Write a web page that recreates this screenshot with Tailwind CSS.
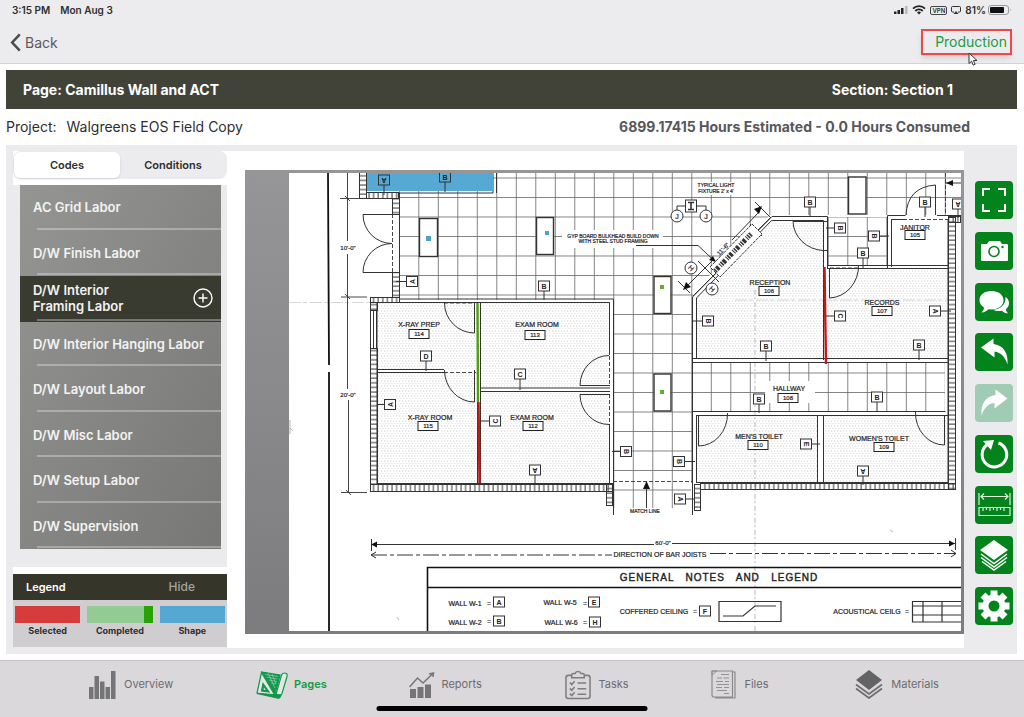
<!doctype html>
<html lang="en">
<head>
<meta charset="utf-8">
<meta name="viewport" content="width=device-width, initial-scale=1">
<title>Camillus Wall and ACT</title>
<script src="https://cdn.jsdelivr.net/npm/@tailwindcss/browser@4"></script>
</head>
<body class="min-h-screen flex flex-col bg-white font-['Inter',sans-serif] text-[#2e2e30]">

<header class="bg-[#ecebee] border-b border-[#d3d2d6]">
  <div class="h-5 pl-3 pr-3 flex items-center justify-between text-[10px] font-semibold">
    <div class="flex gap-2.5"><span>3:15 PM</span><span>Mon Aug 3</span></div>
    <div class="flex items-center gap-1">
      <svg class="w-3.5 h-2.5" viewBox="0 0 14 10"><path d="M0 6.500h2.500V9H0zM3.500 5H6v4H3.500zM7 3h2.500v6H7z" fill="#222"/><path d="M11 1h2.500v8H11z" fill="#bbb"/></svg>
      <svg class="w-3.5 h-2.5" viewBox="0 0 14 10" fill="none" stroke="#222" stroke-width="1.800"><path d="M1 3.600a8.500 8.500 0 0 1 12 0M3.300 6a5.200 5.200 0 0 1 7.400 0"/><path d="M7 9.600L5 7.600a2.800 2.800 0 0 1 4 0z" fill="#222" stroke="none"/></svg>
      <span class="w-[17px] h-[9px] border border-[#444] rounded-xs text-[6px] leading-[7px] text-center">VPN</span>
      <svg class="w-2.5 h-2.5" viewBox="0 0 10 10" fill="none" stroke="#333"><path d="M3 7H1.500Q.5 7 .5 6V2.500q0-1 1-1h7q1 0 1 1V6q0 1-1 1H7"/><path d="M5 6l2.500 3h-5z" fill="#333" stroke="none"/></svg>
      <div class="flex items-center gap-0.5">
        <span>81%</span>
        <svg class="w-6 h-2.5" viewBox="0 0 24 10"><rect x=".5" y=".5" width="20" height="9" rx="2.500" fill="none" stroke="#999"/><rect x="2" y="2" width="14" height="6" rx="1" fill="#111"/><path d="M22 3.500q1.500 1.500 0 3z" fill="#999"/></svg>
      </div>
    </div>
  </div>
  <nav class="relative h-[43px] pl-2.5 pr-3 flex items-center justify-between">
    <button class="pt-0.5 flex items-center gap-1 text-[14px] text-[#5a5a5d]">
      <svg class="w-[11px] h-[19px]" viewBox="0 0 11 20" fill="none" stroke="#4a4a4c" stroke-width="2.600"><path d="M10 1.500L2 10l8 8.500"/></svg>
      Back
    </button>
    <button class="h-[26px] pl-3 pr-[3px] border-2 border-[#ec4a4a] text-[14px] leading-5 text-[#1c9a48] shadow-md">Production</button>
    <svg class="absolute right-[46px] top-8 w-[10px] h-[14px]" viewBox="0 0 10 14"><path d="M1 1v10.500l2.500-2.300 1.700 3.900 1.900-.8-1.700-3.800H9z" fill="#fff" stroke="#333"/></svg>
  </nav>
</header>

<main class="flex-1 pl-1.5 pr-[7px] pt-1.5 pb-1.5">
  <div class="h-[39px] pl-[17px] pr-16 flex items-center justify-between bg-[#424338] text-white text-[14px] font-bold">
    <h1>Page: Camillus Wall and ACT</h1>
    <h2>Section: Section 1</h2>
  </div>
  <div class="h-9 pr-[47px] pb-0.5 flex items-center justify-between text-[14px]">
    <p>Project: <span class="ml-1.5">Walgreens EOS Field Copy</span></p>
    <p class="font-bold text-[#57575a]">6899.17415 Hours Estimated - 0.0 Hours Consumed</p>
  </div>

  <div class="flex bg-[#ebebed]">
    <aside class="w-[221px] shrink-0 pl-[7px] pt-1.5 pb-[7px]">
      <div class="bg-white pb-1.5">
        <div class="h-7 p-px grid grid-cols-2 rounded-lg bg-[#ecebee] text-[11px] font-semibold">
          <button class="rounded-md bg-white shadow">Codes</button>
          <button>Conditions</button>
        </div>
      </div>
      <ul id="codes" class="h-[364px] ml-[7px] mr-1.5 flex flex-col bg-linear-to-br from-[#959693] to-[#777876] text-[13px] leading-4 font-semibold text-[#f3f3f2]"></ul>
      <div class="mt-[18px] pt-[7px] bg-white">
        <div class="h-[26px] pl-[13px] pr-8 flex items-center justify-between bg-[#35352a] text-[11px] font-semibold text-white">
          <span>Legend</span>
          <button class="text-[12px] font-medium text-[#a3a39e]">Hide</button>
        </div>
        <div class="h-[47px] px-0.5 pt-1.5 grid grid-cols-3 gap-[7px] bg-[#cfcdd0] text-center text-[9px] leading-4 font-bold">
          <div><div class="h-[17px] bg-[#d63c3c]"></div>Selected</div>
          <div><div class="h-[17px] bg-[#93cc92] border-r-9 border-[#28a207]"></div>Completed</div>
          <div><div class="h-[17px] bg-[#55a8d1]"></div>Shape</div>
        </div>
      </div>
    </aside>

    <section class="flex-1 mt-1.5 mb-1.5 pl-[18px] pt-[19px] bg-white">
      <svg id="plan" class="w-full font-['Liberation_Sans',sans-serif]" viewBox="245 170 719 464">
        <defs>
          <linearGradient id="frame" x2="0" y2="1"><stop stop-color="#969597"/><stop offset="1" stop-color="#7c7b7e"/></linearGradient>
          <pattern id="tiles" x="398.8" y="177.500" width="19.500" height="19.500" patternUnits="userSpaceOnUse"><path d="M0 .5h19.500M.5 0v19.500" stroke="#666" stroke-width=".8"/></pattern>
          <pattern id="dots" width="3" height="5" patternUnits="userSpaceOnUse"><path d="M0 1h1.200M1.500 3.500h.8" stroke="#c4c4c4" stroke-width=".8"/></pattern>
          <pattern id="brickH" width="4.600" height="20" patternUnits="userSpaceOnUse"><path d="M1 0v20" stroke="#333"/></pattern>
          <pattern id="brickV" width="20" height="4.600" patternUnits="userSpaceOnUse"><path d="M0 1h20" stroke="#333"/></pattern>
          <clipPath id="sheet"><path d="M289 173h672v458H289z"/></clipPath>
        </defs>
        <path d="M245 170h719v464H245z" fill="url(#frame)"/>
        <path d="M289 173h672v458H289z" fill="#fff"/>
        <g clip-path="url(#sheet)" fill="none" stroke="#333">
          <!-- ceiling grid -->
          <path d="M399 173H961V215H770L693 292V483H691V508H613V300H399zM827 217h60v48h-60zM693 363h252v49H693z" fill="url(#tiles)" stroke="none"/>
          <!-- room floors -->
          <path d="M378 303h99v66h-99zM378 373h100v110H378zM481 303h128v85H481zM481 392h128v91H481zM697 358v-62l75-76h51v138zM828 268h120v91H828zM891 220h57v45h-57zM697 416h120v66H697zM823 416h125v66H823z" fill="#fff" stroke="none"/>
          <path d="M378 303h99v66h-99zM378 373h100v110H378zM481 303h128v85H481zM481 392h128v91H481zM697 358v-62l75-76h51v138zM828 268h120v91H828zM697 416h120v66H697zM823 416h125v66H823z" fill="url(#dots)" stroke="none"/>

          <!-- sheet fold -->
          <path d="M755 290V631" stroke="#bbb" stroke-dasharray="5 2 2 3"/>
          <path d="M289 302.500h82M735 300h213" stroke="#ccc" stroke-width=".8" stroke-dasharray="12 2 4 3"/>
          <path d="M290 420v14M290 428l3 3M397 617l2 3M890 530l3 2" stroke="#999" stroke-width=".7"/>

          <!-- left margin and dimensions -->
          <path d="M328 173l1 192M329 372v259" stroke="#111" stroke-width="1.800"/>
          <path d="M347.500 173v68M347.500 254v135M348.500 400v92M340 198.500h37M341 297h26M341 492.500h26M345 196l5 5M345 294l5 5M346 490l5 5" stroke-width=".9"/>

          <!-- brick walls -->
          <g stroke-width="1">
            <g fill="url(#brickV)">
              <rect x="359.500" y="172.500" width="7" height="26"/><rect x="392.500" y="198.500" width="7" height="16"/><rect x="392.500" y="272.500" width="7" height="25"/>
              <rect x="370.500" y="302.500" width="7" height="8"/><rect x="370.500" y="348.500" width="7" height="136"/>
              <rect x="606.500" y="484.500" width="6" height="21"/><rect x="694.500" y="484.500" width="6" height="26"/><rect x="948.500" y="217.500" width="7" height="272"/>
            </g>
            <g fill="url(#brickH)">
              <rect x="366.500" y="192.500" width="32" height="6"/><rect x="370.500" y="297.500" width="29" height="5"/>
              <rect x="370.500" y="484.500" width="242" height="7"/><rect x="700.500" y="483.500" width="255" height="6"/><rect x="948.500" y="216.500" width="12" height="6"/>
            </g>
            <path d="M370.500 310v38M373.500 310v38M376.500 310v38"/>
          </g>

          <!-- partitions -->
          <path d="M399.500 192.500V299H613.500V515M377 302.500H609.500V355M609.500 424V484M377 484V303M378 369.500h66M378 372.500h66M477.500 303v180M480.500 303v180M481 388h129M481 391.500h129M377 483.500h236"/>
          <path d="M692.500 515V297L772 216.500H827.500V268M696.500 358V298l75-77.500H823.500V360M692.500 358.500h256M692.500 362.500h256M827 265.500h121M827 268.500h121M887.500 268V215.500h18M891.500 267V219.500h14M937 215.500h24M692.500 411.500h253M697 415.500h251M696.500 415v68M817.500 415v68M823.500 415v68M697 482.500h251M948 220V484M493 173v20H399M496.500 173v20"/>
          <path d="M392.500 214v58M444 372.500h32M609.500 356v30M609.500 394v30M444 303h30M891 219.500h57M613 481.500h80M830 268h30M698 415.500h30M915 415.500h30M945.500 173v42" stroke-dasharray="4 2" stroke-width=".9"/>

          <!-- doors -->
          <path d="M392 214.500h-29a29 29 0 0 0 29 29M392 272.500h-29a29 29 0 0 1 29 -29M474.500 303v30a30 30 0 0 1-30-30M474.500 370v32a30 32 0 0 1-30-32M610 385.500h-30a29 30 0 0 1 29-30M610 394.500h-30a29 30 0 0 0 29 30M827 221.500h-34a32 30 0 0 0 30 29h4M829.500 268v30a30 32 0 0 0 29-33M935.500 215v-30q-28 2-29.500 30M698.500 415v31a29 32 0 0 0 29-33M944.500 415v30a29 32 0 0 1-29-33"/>

          <!-- light fixtures -->
          <g fill="#fff" stroke-width="1.400">
            <rect x="419.500" y="218.500" width="18" height="38"/><rect x="536.500" y="217.500" width="17" height="37"/><rect x="654" y="276.500" width="17" height="37"/><rect x="654" y="374" width="17" height="37"/><rect x="848.500" y="177" width="17.500" height="37"/>
          </g>
          <path d="M426 236h5v5h-5zM545 231h4v4h-4z" fill="#4ba3c7" stroke="none"/>
          <path d="M660 285h4v4h-4zM660 390h4v4h-4z" fill="#6aaa3c" stroke="none"/>

          <!-- notes over the grid -->
          <path d="M562 230h101v18H562zM696 182h40v13h-40zM893 222h40v20h-40zM765 381h50v22h-50z" fill="#fff" stroke="none"/>
          <path d="M636 245.500h62l16 15"/>

          <!-- bulkhead -->
          <path d="M686 287l28-28M732 240l28-29M678 281l12 12M755 202l15 15M693 296l27-27M755 233l16-16M698 261l21 21M750 224l12 12"/>
          <path d="M710 267l42-43 10 10-42 43z" fill="#fff" stroke-dasharray="3 1"/>
          <path d="M715 271l36-37" stroke-width="5" stroke-dasharray="1.500 1 3 2 1 1"/>
          <path d="M683 290l3-8 5 5zM762 206l-8 3 5 5zM716 262l-7-2 4-4z" fill="#111" stroke="none"/>

          <g fill="#fff">
            <path d="M677 210v-4h29v4"/>
            <circle cx="677" cy="216" r="6"/><circle cx="706" cy="216" r="6"/><circle cx="691" cy="268" r="6"/><circle cx="712" cy="289" r="6"/>
            <rect x="685.500" y="200" width="11" height="12"/>
            <path d="M688 202.500h6M688 209.500h6M691 202.500v7" stroke-width="1.600"/>
          </g>

          <!-- overall dimensions -->
          <path d="M371.500 539v12M955.500 538v12M372 544.500h282M672 543.500h283"/>
          <path d="M371 555h241M710 553.500h246" stroke-dasharray="16 3 4 3" stroke-width="1.200"/>
          <path d="M371 544.500l6-3v6zM955 543.500l-6-3v6zM646.500 481l-3.500 8h7z" fill="#111" stroke="none"/>
          <path d="M376 552l-5 3 5 3M951 550l5 3.500-5 3.500M646.500 488v20"/>
          <path d="M961 183h-16" /><path d="M946 183l7-3v6z" fill="#111" stroke="none"/>

          <!-- general notes box -->
          <path d="M427.500 631V567.500H961M427.500 587.500H961" stroke="#111" stroke-width="1.600"/>
          <path d="M719 601.500h62v20h-62zM723 616h20l12-10h21M961 601.500h-48.500v20.500H961M912 606h49M912 615h49M923 601v21M942 601v21" stroke-width="1.200"/>

          <!-- takeoff shapes -->
          <path d="M367 173h126v18H367z" fill="#55a9d2" stroke="none"/>
          <path d="M477.500 303l.5 99" stroke="#4f9f0c" stroke-width="2.400"/>
          <path d="M478.500 402l1 81M824.500 267l1.500 97" stroke="#c31919" stroke-width="2.400"/>
          <g id="tags"></g>
        </g>
        <g id="labels" fill="#222" stroke="#222" stroke-width=".2" text-anchor="middle"></g>
      </svg>
    </section>

    <div id="tools" class="w-[53px] shrink-0 pl-[11px] pr-1 pt-9 pb-[29px] flex flex-col justify-between">
      <button aria-label="Fit to screen" class="size-[38px] rounded-sm bg-[#03831c]"><svg viewBox="0 0 38 38" fill="none" stroke="#fff" stroke-width="2"><path d="M8 15V8h7M23 8h7v7M30 23v7h-7M15 30H8v-7"/></svg></button>
      <button aria-label="Camera" class="size-[38px] rounded-sm bg-[#03831c]"><svg viewBox="0 0 38 38"><path d="M7 12q-1 0-1 1v15q0 1 1 1h25q1 0 1-1V13q0-1-1-1h-5l-2-3H14l-2 3z" fill="#fff"/><circle cx="19" cy="19.500" r="5" fill="none" stroke="#03831c" stroke-width="1.600"/><circle cx="27.500" cy="15" r="1.200" fill="#03831c"/></svg></button>
      <button aria-label="Comments" class="size-[38px] rounded-sm bg-[#03831c]"><svg viewBox="0 0 38 38" fill="#fff"><path d="M16.500 8C9 8 4.500 12 4.500 17c0 3 1.500 5.500 4.500 7.500 0 2-1 3.500-2.500 5 3 0 5-1.500 7-3.300l3 .3c7 0 12-4 12-9.300S23.500 8 16.500 8z"/><path d="M30.500 14c2 1.200 3.500 3.500 3.500 6 0 2.500-1 4.500-3 6 0 2 .8 3 2 4.300-2.600 0-4.500-1-6-2.600-3.500.6-7 .3-9-1C25 26.500 31 22 30.500 14z"/></svg></button>
      <button aria-label="Undo" class="size-[38px] rounded-sm bg-[#03831c]"><svg viewBox="0 0 38 38" fill="#fff"><path d="M6 14.500L18.500 5.500v5.500C28 12.500 33.500 19 32.500 31.500 30 24 26 19.500 19.500 18.500v6z"/></svg></button>
      <button aria-label="Redo" disabled class="size-[38px] rounded-sm bg-[#a1ccb4]"><svg viewBox="0 0 38 38" fill="#fff"><path d="M32.500 14.500L20.500 5.500v5.500C11 12.500 5.500 19 6.500 31.500 9 24 13 19.500 19.500 19v5.500z"/></svg></button>
      <button aria-label="Reset" class="size-[38px] rounded-sm bg-[#03831c]"><svg viewBox="0 0 38 38"><path d="M23.500 8A12.300 12.300 0 1 1 12 9.800" fill="none" stroke="#fff" stroke-width="3"/><path d="M8 6l11-1-3 10z" fill="#fff"/></svg></button>
      <button aria-label="Measure" class="size-[38px] rounded-sm bg-[#03831c]"><svg viewBox="0 0 38 38" fill="none" stroke="#dff0e2" stroke-width="1.200"><path d="M4 7v12M35 7v12M6 10.500h27M9 7.500l-3 3 3 3M30 7.500l3 3-3 3M4 21.500h31v8H4zM8 22v3M11.500 22v2M15 22v3M18.500 22v2M22 22v3M25.500 22v2M29 22v3"/></svg></button>
      <button aria-label="Layers" class="size-[38px] rounded-sm bg-[#03831c]"><svg viewBox="0 0 38 38"><path d="M19 4l14 10-14 10L5 14z" fill="#fff"/><path d="M6 18l13 9.500L32 18M6 21.500L19 31l13-9.500M7 25.500l12 8.500 12-8.500" fill="none" stroke="#fff" stroke-width="1.500"/></svg></button>
      <button aria-label="Settings" class="size-[38px] rounded-sm bg-[#03831c]"><svg viewBox="0 0 38 38"><g stroke="#fff" stroke-width="7"><path d="M19 3.500v31M3.500 19h31M8 8l22 22M30 8L8 30"/></g><circle cx="19" cy="19" r="11.500" fill="#fff"/><circle cx="19" cy="19" r="5.500" fill="#03831c"/></svg></button>
    </div>
  </div>
</main>

<footer class="relative h-[57px] pl-[89px] pr-[85px] pb-[9px] flex items-center justify-between bg-[#dad8db] border-t border-[#c3c1c5] text-[11px] text-[#6c6b6e]">
  <a href="#" class="flex items-center gap-2">
    <svg class="w-[27px] h-7" viewBox="0 0 27 28" fill="#757477"><path d="M0 16h4.500v12H0zM5.500 5H10v23H5.500zM11 10.500h4.500V28H11zM16.500 16H21v12h-4.500zM22 0h4.500v28H22z"/></svg>Overview</a>
  <a href="#" class="flex items-center gap-1.5 font-semibold text-[#129a48]">
    <svg class="w-8 h-7" viewBox="0 0 32 28" fill="none" stroke="#12984a" stroke-width="1.200">
      <path d="M6 1l18 3-5 19z" fill="#12984a"/>
      <path d="M9 3.500l13 2M10.500 6l11 2M13 9l8 1.500M15 12l5 1M12 2l7 15M16 3l4 10" stroke="#9bcdb0" stroke-width=".7"/>
      <path d="M5.500 1.500L1 22l18 2.500z" fill="#e6e6e7"/>
      <path d="M7 12.500L5.500 20l7.500 1z" fill="#12984a"/>
      <path d="M8 16.500l-.5 2.200 2.300.3z" fill="#e6e6e7" stroke="none"/>
      <path d="M25.500 4q2-3 5-1.500 1 1 .5 3L26 22.500q-1 2-3 1.500l-3-.5z" fill="#e6e6e7"/>
      <path d="M1 22.500l24 1.500q-1 4-4 3z" fill="#12984a"/>
    </svg>Pages</a>
  <a href="#" class="flex items-center gap-1.5">
    <svg class="w-[26px] h-7" viewBox="0 0 26 28" fill="#757477"><path d="M1 18h6v9H1zM8.500 16h6v11h-6zM16 13.500h6V27h-6z"/><path d="M.5 16l8-9 5.500 5L24 2.500M20 3l4.500-1-.5 4" fill="none" stroke="#757477" stroke-width="1.500"/></svg>Reports</a>
  <a href="#" class="flex items-center gap-2">
    <svg class="w-[26px] h-[30px]" viewBox="0 0 27 30" fill="none" stroke="#7e7d80" stroke-width="1.600"><path d="M7 5H3.500Q1 5 1 7.500v19Q1 29 3.500 29h20q2.500 0 2.500-2.500v-19Q26 5 23.500 5H20M7 7.500V4.500Q7 3 9 3h1.500q.5-2 3-2t3 2H18q2 0 2 1.500v3zM13 13h9M13 19h9M13 24.500h9M5 12.500l2 2 3-3.500M5 18.500l2 2 3-3.500M5 24l2 2 3-3.500"/></svg>Tasks</a>
  <a href="#" class="mr-1 flex items-center gap-2">
    <svg class="w-[25px] h-[29px]" viewBox="0 0 25 29" fill="none" stroke="#8b8a8d" stroke-width="1.200"><path d="M1 1h20.500v26H3q-2 0-2-2zM21.500 2H24v26H4"/><path d="M1 5l5-4H1zM10 4.500h8M6 8h5M12.500 8H18M5 11.500h7M14 11.500h4M6 14.500h12M5 17.500h6M13 17.500h5M6 20.500h10M13 23.500h5" stroke-width=".9"/></svg>Files</a>
  <a href="#" class="flex items-center gap-2">
    <svg class="w-7 h-[29px]" viewBox="0 0 28 29"><path d="M14 0l13 10-13 10L1 10z" fill="#636265"/><path d="M1 14.500l13 9.500 13-9.500M1 18.500L14 28l13-9.500" fill="none" stroke="#6d6c6f" stroke-width="1.700"/></svg>Materials</a>
  <div class="absolute bottom-1.5 left-1/2 -translate-x-1/2 w-[271px] h-[5px] rounded-full bg-black"></div>
</footer>

<script>
const codes = ['AC Grid Labor', 'D/W Finish Labor', 'D/W Interior Framing Labor', 'D/W Interior Hanging Labor', 'D/W Layout Labor', 'D/W Misc Labor', 'D/W Setup Labor', 'D/W Supervision']
const selected = 2

document.getElementById('codes').innerHTML = codes.map((name, i) => `
  <li class="flex-1 flex flex-col ${i === selected ? 'bg-[#3a3b30]' : ''}">
    <button class="flex-1 pt-0.5 pl-[13px] pr-2 flex items-center justify-between text-left">
      <span class="${i === selected ? 'w-28' : 'whitespace-nowrap'}">${name}</span>
      ${i === selected ? '<svg class="w-5 h-5" viewBox="0 0 20 20" fill="none" stroke="#fff" stroke-width="1.400"><circle cx="10" cy="10" r="9"/><path d="M10 5.500v9M5.500 10h9"/></svg>' : ''}
    </button>
    <div class="ml-[17px] mb-px h-0.5 bg-white/30"></div>
  </li>`).join('')

// x, y, letter, rotation, leader end x, leader end y
const tags = [
  [384, 180, 'A', 180, 384, 195], [445, 177, 'B', 0, 445, 192], [412, 281.5, 'A', -90, 396, 281.5],
  [544, 286, 'B', 0, 544, 300], [426, 356, 'D', 0, 426, 371], [390, 404.5, 'A', -90, 377, 404.5],
  [520, 374, 'C', 0, 520, 390], [495, 421, 'C', -90, 480, 421], [535, 470, 'A', 180, 535, 484],
  [626, 451.5, 'B', 90, 612, 451.5], [679, 461.5, 'B', 90, 695, 461.5], [680, 499, 'A', 90, 695, 499],
  [708, 321, 'B', 90, 693, 321], [810, 202, 'B', 0, 810, 217], [840, 228, 'B', 90, 826, 228],
  [874, 236, 'B', 90, 889, 236], [863, 253, 'B', 0, 863, 268], [925, 202, 'B', 0, 925, 217],
  [958, 204, 'A', 180, 958, 218], [840, 316, 'C', 90, 826, 316], [935, 311, 'A', 90, 951, 311],
  [766, 346, 'B', 0, 766, 361], [919, 345, 'B', 0, 919, 360], [759, 399, 'B', 0, 759, 413],
  [877, 397, 'B', 0, 877, 412], [806, 444, 'E', 90, 820, 444], [863, 471, 'A', 180, 863, 485],
  [499, 602, 'A', 0], [499, 621, 'B', 0], [594, 602, 'E', 0], [595, 622, 'H', 0], [705, 611, 'F', 0],
]

document.getElementById('tags').innerHTML = tags.map(([x, y, letter, turn, ex = x, ey = y]) => `
  <path d="M${x} ${y}L${ex} ${ey}"/>
  <rect x="${x - 5.5}" y="${y - 5}" width="11" height="10" fill="${y < 185 ? '#55a9d2' : '#fff'}"/>
  <text transform="translate(${x} ${y}) rotate(${turn})" y="2.5" text-anchor="middle" font-size="7" font-weight="bold" fill="#222" stroke="none">${letter}</text>`).join('')

// name, x, y, number, number x, number y
const rooms = [
  ['X-RAY PREP', 419, 324, 114, 419, 334], ['EXAM ROOM', 537, 324, 113, 535, 335],
  ['X-RAY ROOM', 430, 417, 115, 428, 426], ['EXAM ROOM', 532, 417, 112, 533, 426],
  ['RECEPTION', 770, 282, 106, 769, 291], ['RECORDS', 882, 302, 107, 882, 311],
  ['JANITOR', 915, 227, 105, 915, 235], ['HALLWAY', 789, 388, 108, 788, 398],
  ["MEN'S TOILET", 759, 436, 110, 758, 445], ["WOMEN'S TOILET", 879, 438, 109, 884, 447],
]

// text, x, y, size, rotation
const notes = [
  ['10\'-0"', 348, 248, 6, 0], ['20\'-0"', 348, 395, 6, 0], ['60\'-0"', 663, 543, 6, 0],
  ['GYP BOARD BULKHEAD BUILD DOWN', 613, 236, 5, 0], ['WITH STEEL STUD FRAMING', 613, 241, 5, 0],
  ['TYPICAL LIGHT', 716, 185, 5, 0], ["FIXTURE 2' x 4'", 716, 191, 5, 0],
  ['11\'-6"', 723, 249, 6, -46], ['MATCH LINE', 645, 511, 5, 0],
  ['DIRECTION OF BAR JOISTS', 660, 554, 7, 0],
  ['J', 677, 216, 7, 0], ['J', 706, 216, 7, 0], ['H', 691, 268, 7, 45], ['H', 712, 289, 7, 45],
  ['WALL W-1', 465, 603, 7, 0], ['WALL W-2', 465, 622, 7, 0], ['WALL W-5', 560, 602, 7, 0], ['WALL W-6', 561, 622, 7, 0],
  ['=', 489, 603, 7, 0], ['=', 489, 621, 7, 0], ['=', 585, 603, 7, 0], ['=', 585, 622, 7, 0],
  ['COFFERED CEILING', 654, 611, 7, 0], ['=', 695, 611, 7, 0], ['ACOUSTICAL CEILG', 867, 611, 7, 0], ['=', 907, 611, 7, 0],
]

const text = (str, x, y, size, turn = 0) =>
  `<text transform="translate(${x} ${y}) rotate(${turn})" y="${size * 0.36}" font-size="${size}">${str}</text>`

document.getElementById('labels').innerHTML = rooms.map(([name, x, y, no, nx, ny]) => `
  ${text(name, x, y, 7)}
  <rect x="${nx - 10}" y="${ny - 4.5}" width="20" height="9" fill="#fff" stroke-width="1"/>
  ${text(no, nx, ny, 6)}`).join('')
  + notes.map(n => text(...n)).join('')
  + '<text x="719" y="581" font-size="10" stroke-width=".4" class="tracking-widest" xml:space="preserve">GENERAL   NOTES   AND   LEGEND</text>'
</script>
</body>
</html>
